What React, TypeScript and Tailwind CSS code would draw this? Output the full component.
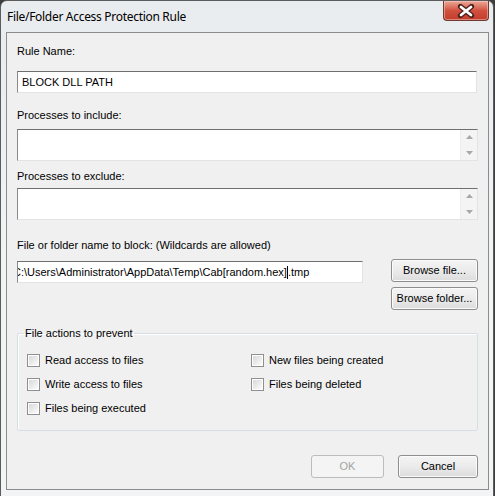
import type { ReactNode } from "react";

const ui = { fontFamily: '"Liberation Sans", Arial, sans-serif' };
const titleFont = { fontFamily: '"Noto Sans", "Open Sans", sans-serif' };

const Caption = ({ children, className = "" }: { children: ReactNode; className?: string }) => (
  <div className={`h-[13px] text-[11px] leading-[13px] text-black ${className}`}>{children}</div>
);

const TextBox = ({ children, className = "" }: { children?: ReactNode; className?: string }) => (
  <div
    className={`h-[22px] border border-t-[#6f6f6f] border-l-[#8a8a8a] border-r-[#e3e3e3] border-b-[#e3e3e3] bg-white overflow-hidden flex items-center ${className}`}
  >
    {children}
  </div>
);

// multi-line box with a disabled vertical scrollbar
const ListBox = ({ className = "" }: { className?: string }) => (
  <div
    className={`h-[32px] border border-t-[#6f6f6f] border-l-[#8a8a8a] border-r-[#e3e3e3] border-b-[#e3e3e3] bg-white flex justify-end ${className}`}
  >
    <div className="w-[17px] h-full bg-[#f4f4f4] border-l border-[#ececec] flex flex-col items-center justify-between py-[5px]">
      <svg width="7" height="4" viewBox="0 0 7 4">
        <path d="M0 4 L3.5 0 L7 4 Z" fill="#a8a8a8" />
      </svg>
      <svg width="7" height="4" viewBox="0 0 7 4">
        <path d="M0 0 L7 0 L3.5 4 Z" fill="#a8a8a8" />
      </svg>
    </div>
  </div>
);

const Button = ({
  children,
  className = "",
  disabled = false,
}: {
  children: ReactNode;
  className?: string;
  disabled?: boolean;
}) => (
  <button
    disabled={disabled}
    className={
      disabled
        ? `h-[23px] rounded-[3px] border border-[#bcbcbc] bg-[#f4f4f4] text-[11px] text-[#a3a3a3] ${className}`
        : `h-[23px] rounded-[3px] border border-[#8e8e8e] bg-linear-to-b from-[#f4f4f4] via-[#ebebeb] to-[#dcdcdc] shadow-[inset_0_0_0_1px_#fbfbfb] text-[11px] text-black ${className}`
    }
    style={ui}
  >
    {children}
  </button>
);

const Check = ({ label }: { label: string }) => (
  <label className="h-[24px] flex items-center gap-[5px] text-[11px] text-black">
    <span className="w-[13px] h-[13px] border border-[#8e8f8f] bg-white p-[1px] shrink-0">
      <span className="block w-full h-full bg-linear-to-br from-[#d9d9d9] to-[#fbfbfb]" />
    </span>
    {label}
  </label>
);

export default function App() {
  return (
    <div className="w-[495px] h-[496px] bg-[#3d3d3d] overflow-hidden" style={ui}>
      <div className="w-[494px] h-[497px] rounded-t-[7px] border border-[#5c5c5c] bg-linear-to-b from-[#e9ecef] via-[#f1f3f5] to-[#f3f4f6] flex flex-col">
        {/* title bar */}
        <div className="h-[31px] flex items-start">
          <div className="pl-[6px] pt-[8px] text-[12px] leading-[16px] tracking-[-0.3px] text-black" style={titleFont}>
            File/Folder Access Protection Rule
          </div>
          <div className="ml-auto mr-[4px] w-[46px] h-[20px] rounded-b-[4px] border border-t-0 border-[#6e3b34] bg-linear-to-b from-[#e9a999] via-[#d2503f] to-[#c23d2c] shadow-[inset_0_0_0_1px_rgba(255,220,210,0.45)] flex items-center justify-center">
            <svg width="18" height="14" viewBox="0 0 18 14">
              <path d="M3.5 2.5 L14.5 11.5 M14.5 2.5 L3.5 11.5" stroke="#4a1f1a" strokeWidth="5.2" strokeLinecap="round" />
              <path d="M4 3 L14 11 M14 3 L4 11" stroke="#ffffff" strokeWidth="2.8" strokeLinecap="round" />
            </svg>
          </div>
        </div>

        {/* client area */}
        <div className="ml-[5px] w-[483px] h-[458px] border border-[#8c8c8c] bg-[#f0f0f0] flex flex-col px-[10px]">
          <Caption className="mt-[12px]">Rule Name:</Caption>
          <TextBox className="mt-[13px] w-[460px]">
            <span className="pl-[4px] text-[11px] text-black">BLOCK DLL PATH</span>
          </TextBox>

          <Caption className="mt-[16px]">Processes to include:</Caption>
          <ListBox className="mt-[7px] w-[461px]" />

          <Caption className="mt-[9px]">Processes to exclude:</Caption>
          <ListBox className="mt-[5px] w-[461px]" />

          <Caption className="mt-[19px]">File or folder name to block: (Wildcards are allowed)</Caption>
          <div className="mt-[6px] flex items-start">
            <TextBox className="mt-[3px] w-[346px]">
              <span className="ml-[-5px] whitespace-nowrap text-[11px] text-black flex items-center">
                C:\Users\Administrator\AppData\Temp\Cab[random.hex]
                <span className="inline-block w-[1px] h-[13px] bg-black" />
                .tmp
              </span>
            </TextBox>
            <div className="ml-auto flex flex-col gap-[5px] pt-[1px]">
              <Button className="w-[87px]">Browse file...</Button>
              <Button className="w-[87px]">Browse folder...</Button>
            </div>
          </div>

          <fieldset className="mt-[17px] w-[461px] border border-[#d5dfe5] shadow-[inset_1px_1px_0_#ffffff] rounded-[2px] pb-[10px]">
            <legend className="ml-[6px] px-[1px] h-[13px] text-[11px] leading-[13px] text-black">
              File actions to prevent
            </legend>
            <div className="pt-[8px] pl-[9px] grid grid-cols-[224px_1fr]">
              <Check label="Read access to files" />
              <Check label="New files being created" />
              <Check label="Write access to files" />
              <Check label="Files being deleted" />
              <Check label="Files being executed" />
            </div>
          </fieldset>

          <div className="mt-[24px] flex justify-end gap-[14px]">
            <Button disabled className="w-[73px]">
              OK
            </Button>
            <Button className="w-[80px]">Cancel</Button>
          </div>
        </div>
      </div>
    </div>
  );
}
